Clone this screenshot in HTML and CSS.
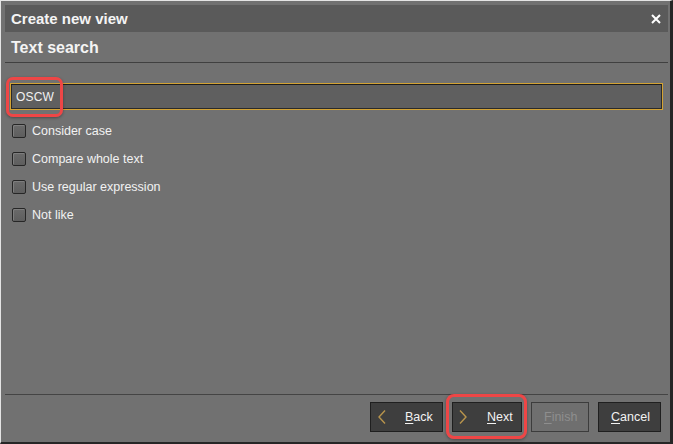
FILE: index.html
```
<!DOCTYPE html>
<html>
<head>
<meta charset="utf-8">
<link rel="stylesheet" href="styles.css">
</head>
<body>
<div class="window">
  <div class="titlebar">
    <span class="title">Create new view</span>
    <svg class="close" width="10" height="10" viewBox="0 0 10 10"><path d="M1 1 L9 9 M9 1 L1 9" stroke="#ffffff" stroke-width="2" fill="none"/></svg>
  </div>
  <div class="heading">Text search</div>
  <div class="content">
    <div class="field">
      <input class="textbox" type="text" value="OSCW">
      <div class="mark mark-input"></div>
    </div>
    <div class="options">
      <label class="option"><span class="box"></span><span class="label">Consider case</span></label>
      <label class="option"><span class="box"></span><span class="label">Compare whole text</span></label>
      <label class="option"><span class="box"></span><span class="label">Use regular expression</span></label>
      <label class="option"><span class="box"></span><span class="label">Not like</span></label>
    </div>
  </div>
  <div class="footer">
    <button class="btn btn-back"><svg class="chev" width="8" height="14" viewBox="0 0 8 14"><polyline points="7,0.5 1,7 7,13.5" stroke="#b8944c" stroke-width="1.4" fill="none"/></svg><span><u>B</u>ack</span></button>
    <div class="next-wrap">
      <button class="btn btn-next"><svg class="chev" width="8" height="14" viewBox="0 0 8 14"><polyline points="1,0.5 7,7 1,13.5" stroke="#b8944c" stroke-width="1.4" fill="none"/></svg><span><u>N</u>ext</span></button>
      <div class="mark mark-next"></div>
    </div>
    <button class="btn btn-finish" disabled><span><u>F</u>inish</span></button>
    <button class="btn btn-cancel"><span><u>C</u>ancel</span></button>
  </div>
</div>
</body>
</html>
```
FILE: styles.css
```
html, body {
  margin: 0;
  padding: 0;
  background: #717171;
}
body {
  width: 673px;
  height: 444px;
  overflow: hidden;
  font-family: "Liberation Sans", Arial, sans-serif;
}
.window {
  box-sizing: border-box;
  width: 673px;
  height: 444px;
  border-top: 1px solid #e4e4e4;
  border-left: 1px solid #e4e4e4;
  border-right: 3px solid #262626;
  border-bottom: 2px solid #262626;
  padding: 4px 2px 0 4px;
  background: #717171;
  display: flex;
  flex-direction: column;
}
.titlebar {
  height: 27px;
  background: #5a5a5a;
  display: flex;
  align-items: center;
  justify-content: space-between;
  padding: 0 7px 0 6px;
  flex: none;
}
.title {
  color: #f4f4f4;
  font-weight: bold;
  font-size: 15px;
  line-height: 27px;
}
.close {
  display: block;
  margin-top: 1px;
}
.heading {
  height: 29px;
  box-sizing: content-box;
  padding: 1px 0 0 6px;
  border-bottom: 1px solid #404040;
  color: #f4f4f4;
  font-weight: bold;
  font-size: 16px;
  line-height: 29px;
  flex: none;
}
.content {
  flex: 1;
  padding: 20px 5px 0 5px;
}
.field {
  position: relative;
}
.textbox {
  display: block;
  box-sizing: border-box;
  width: 100%;
  height: 27px;
  margin: 0;
  border: 1px solid #d3a334;
  box-shadow: inset 0 1px 0 #1e1e1e, inset 0 0 0 1px #2a2a2a;
  background: #5f5f5f;
  color: #f2f2f2;
  font-family: "Liberation Sans", Arial, sans-serif;
  font-size: 12px;
  letter-spacing: 0.2px;
  padding: 1px 5px 0 5px;
  outline: none;
}
.mark {
  position: absolute;
  box-sizing: border-box;
  border: 3px solid #ee4646;
  border-radius: 7px;
  box-shadow: 0 1px 3px rgba(0,0,0,0.35);
  pointer-events: none;
}
.mark-input {
  left: -4px;
  top: -6px;
  width: 57px;
  height: 40px;
}
.options {
  display: flex;
  flex-direction: column;
  margin-top: 7px;
  padding-left: 2px;
}
.option {
  height: 28px;
  display: flex;
  align-items: center;
}
.box {
  box-sizing: border-box;
  width: 14px;
  height: 14px;
  border: 1px solid #262626;
  border-radius: 2px;
  background: linear-gradient(#6a6a6a, #5e5e5e);
  box-shadow: inset 1px 1px 0 #7e7e7e;
  margin-right: 6px;
  flex: none;
}
.label {
  color: #f2f2f2;
  font-size: 12.5px;
}
.footer {
  flex: none;
  border-top: 1px solid #444444;
  padding: 7px 7px 10px 0;
  display: flex;
  justify-content: flex-end;
  gap: 9px;
}
.btn {
  box-sizing: border-box;
  height: 30px;
  margin: 0;
  border: 1px solid #1f1f1f;
  background: #3e3e3e;
  color: #f2f2f2;
  font-family: "Liberation Sans", Arial, sans-serif;
  font-size: 12.5px;
  padding: 0 12px;
  display: flex;
  align-items: center;
  border-radius: 0;
}
.btn u {
  text-decoration-thickness: 1px;
  text-underline-offset: 2px;
}
.chev {
  display: block;
  flex: none;
}
.btn-back {
  width: 73px;
  padding-left: 7px;
}
.btn-back .chev {
  margin-right: 19px;
}
.next-wrap {
  position: relative;
}
.btn-next {
  width: 70px;
  padding-left: 6px;
}
.btn-next .chev {
  margin-right: 20px;
}
.mark-next {
  left: -6px;
  top: -8px;
  width: 81px;
  height: 45px;
  border-radius: 8px;
}
.btn-finish {
  width: 58px;
  background: #6f6f6f;
  border-color: #3c3c3c;
  color: #8e8e8e;
}
.btn-cancel {
  width: 63px;
}
```
